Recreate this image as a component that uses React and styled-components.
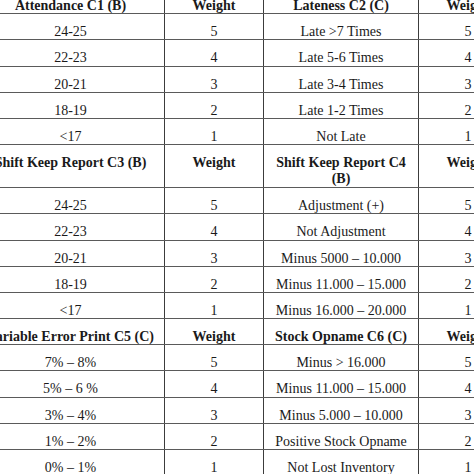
import React from "react";
import styled, { createGlobalStyle } from "styled-components";

const Global = createGlobalStyle`
  html, body { margin: 0; padding: 0; background: #ffffff; }
  body { font-family: "Liberation Serif", "Times New Roman", serif; color: #1a1a1a; }
`;

const Viewport = styled.div`
  width: 474px;
  height: 474px;
  overflow: hidden;
  background: #ffffff;
`;

const Table = styled.table`
  margin: -13px 0 0 -24px;
  border-collapse: collapse;
  table-layout: fixed;
  width: 541px;
  font-size: 14px;
  line-height: 15px;
`;

const Col = styled.col`
  width: ${(p) => p.$w}px;
`;

const Row = styled.tr`
  height: ${(p) => p.$h}px;
`;

const Cell = styled.td`
  border-top: 1px solid #5a5a5a;
  border-bottom: 1px solid #5a5a5a;
  border-left: 1px solid #3c3c3c;
  border-right: 1px solid #3c3c3c;
  padding: 10px 2px 0;
  vertical-align: top;
  text-align: center;
  white-space: nowrap;
  font-weight: ${(p) => (p.$head ? 700 : 400)};
`;

const Line2 = styled.span`
  display: block;
  margin-top: 1px;
`;

const widths = [188, 99, 155, 99];

const sections = [
  {
    head: ["Attendance C1 (B)", "Weight", "Lateness C2 (C)", "Weight"],
    headH: 26.2,
    rows: [
      ["24-25", "5", "Late >7 Times", "5"],
      ["22-23", "4", "Late 5-6 Times", "4"],
      ["20-21", "3", "Late 3-4 Times", "3"],
      ["18-19", "2", "Late 1-2 Times", "2"],
      ["<17", "1", "Not Late", "1"],
    ],
  },
  {
    head: ["Shift Keep Report C3 (B)", "Weight", "Shift Keep Report C4\n(B)", "Weight"],
    headH: 43,
    rows: [
      ["24-25", "5", "Adjustment (+)", "5"],
      ["22-23", "4", "Not Adjustment", "4"],
      ["20-21", "3", "Minus 5000 – 10.000", "3"],
      ["18-19", "2", "Minus 11.000 – 15.000", "2"],
      ["<17", "1", "Minus 16.000 – 20.000", "1"],
    ],
  },
  {
    head: ["Variable Error Print C5 (C)", "Weight", "Stock Opname C6 (C)", "Weight"],
    headH: 26.2,
    rows: [
      ["7% – 8%", "5", "Minus > 16.000", "5"],
      ["5% – 6 %", "4", "Minus 11.000 – 15.000", "4"],
      ["3% – 4%", "3", "Minus 5.000 – 10.000", "3"],
      ["1% – 2%", "2", "Positive Stock Opname", "2"],
      ["0% – 1%", "1", "Not Lost Inventory", "1"],
    ],
  },
];

const Multi = ({ text }) => {
  const [first, ...rest] = text.split("\n");
  return (
    <>
      {first}
      {rest.map((t, i) => (
        <Line2 key={i}>{t}</Line2>
      ))}
    </>
  );
};

export default function App() {
  return (
    <Viewport>
      <Global />
      <Table>
        <colgroup>
          {widths.map((w, i) => (
            <Col key={i} $w={w} />
          ))}
        </colgroup>
        <tbody>
          {sections.map((s, si) => (
            <React.Fragment key={si}>
              <Row $h={s.headH}>
                {s.head.map((h, i) => (
                  <Cell key={i} $head>
                    <Multi text={h} />
                  </Cell>
                ))}
              </Row>
              {s.rows.map((r, ri) => (
                <Row key={ri} $h={26.2}>
                  {r.map((c, ci) => (
                    <Cell key={ci}>{c}</Cell>
                  ))}
                </Row>
              ))}
            </React.Fragment>
          ))}
        </tbody>
      </Table>
    </Viewport>
  );
}
